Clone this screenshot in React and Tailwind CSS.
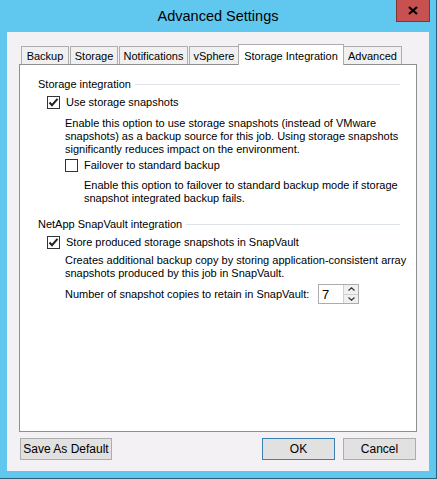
import React from "react";

function Check({ checked }) {
  return (
    <div className="w-[13px] h-[13px] border border-[#333333] bg-white flex items-center justify-center shrink-0">
      {checked && (
        <svg width="11" height="11" viewBox="0 0 11 11">
          <path d="M1.5 5.5 L4 8.2 L9.5 1.8" fill="none" stroke="#222" strokeWidth="2" />
        </svg>
      )}
    </div>
  );
}

function Tab({ label, w, selected }) {
  if (selected) {
    return (
      <div
        className={`${w} h-[21px] -mx-[2px] relative z-10 bg-white border border-b-0 border-[#adadad] flex items-start justify-center pt-[3px] -mb-[1px]`}
      >
        {label}
      </div>
    );
  }
  return (
    <div
      className={`${w} h-[19px] mt-[2px] bg-[#f0f0f0] border border-[#adadad] border-b-0 flex items-center justify-center`}
    >
      {label}
    </div>
  );
}

export default function App() {
  return (
    <div
      className="w-[437px] h-[479px] bg-[#60c8ef] border-r border-b border-[#2f5f74] flex flex-col text-black"
      style={{ fontFamily: '"Liberation Sans", Arial, sans-serif' }}
    >
      <div className="h-[32px] relative flex items-center justify-center shrink-0">
        <span className="text-[14.5px] leading-none mt-[1px]">Advanced Settings</span>
        <div className="absolute top-0 right-[6px] w-[34px] h-[22px] bg-[#c75050] border border-[#803333] border-t-0 flex items-center justify-center">
          <svg width="10" height="9" viewBox="0 0 10 9">
            <path d="M1 1 L9 8 M9 1 L1 8" stroke="#000" strokeWidth="2.2" />
          </svg>
        </div>
      </div>
      <div className="ml-[7px] mr-[7px] mb-[7px] flex-1 bg-[#f4f1f5] flex flex-col px-[12px] pt-[12px] text-[11px]">
        <div className="flex items-start h-[20px] pl-[2px] gap-[1px]">
          <Tab label="Backup" w="w-[48px]" />
          <Tab label="Storage" w="w-[48px]" />
          <Tab label="Notifications" w="w-[69px]" />
          <Tab label="vSphere" w="w-[50px]" />
          <Tab label="Storage Integration" w="w-[106px]" selected />
          <Tab label="Advanced" w="w-[59px]" />
        </div>
        <div className="h-[368px] bg-white border border-[#8e8f8f] flex flex-col pl-[18px] pr-[16px] pt-[13px] leading-[13px] whitespace-nowrap">
          <div className="flex items-center h-[13px]">
            <span>Storage integration</span>
            <div className="flex-1 h-px bg-[#dde3e8] ml-[4px]" />
          </div>
          <div className="flex items-center h-[13px] mt-[5px] pl-[9px]">
            <Check checked />
            <span className="ml-[6px]">Use storage snapshots</span>
          </div>
          <div className="mt-[8px] pl-[27px]">
            Enable this option to use storage snapshots (instead of VMware
            <br />
            snapshots) as a backup source for this job. Using storage snapshots
            <br />
            significantly reduces impact on the environment.
          </div>
          <div className="flex items-center h-[13px] mt-[3px] pl-[27px]">
            <Check />
            <span className="ml-[6px]">Failover to standard backup</span>
          </div>
          <div className="mt-[7px] pl-[46px]">
            Enable this option to failover to standard backup mode if storage
            <br />
            snapshot integrated backup fails.
          </div>
          <div className="flex items-center h-[13px] mt-[13px]">
            <span>NetApp SnapVault integration</span>
            <div className="flex-1 h-px bg-[#dde3e8] ml-[4px]" />
          </div>
          <div className="flex items-center h-[13px] mt-[5px] pl-[9px]">
            <Check checked />
            <span className="ml-[6px]">Store produced storage snapshots in SnapVault</span>
          </div>
          <div className="mt-[5px] pl-[27px]">
            Creates additional backup copy by storing application-consistent array
            <br />
            snapshots produced by this job in SnapVault.
          </div>
          <div className="flex items-center mt-[4px] pl-[27px]">
            <span className="w-[253px]">Number of snapshot copies to retain in SnapVault:</span>
            <div className="flex h-[20px] border border-[#acacac] bg-white">
              <div className="w-[24px] pl-[3px] text-[13px] flex items-center">7</div>
              <div className="flex flex-col w-[15px] border-l border-[#d0d0d0] bg-[#f0f0f0]">
                <div className="flex-1 flex items-center justify-center border-b border-[#d0d0d0]">
                  <svg width="7" height="4" viewBox="0 0 7 4"><path d="M0.5 3.5 L3.5 0.8 L6.5 3.5" fill="none" stroke="#333" strokeWidth="1.2" /></svg>
                </div>
                <div className="flex-1 flex items-center justify-center">
                  <svg width="7" height="4" viewBox="0 0 7 4"><path d="M0.5 0.5 L3.5 3.2 L6.5 0.5" fill="none" stroke="#333" strokeWidth="1.2" /></svg>
                </div>
              </div>
            </div>
          </div>
        </div>
        <div className="flex mt-[6px] h-[22px] text-[12px]">
          <div className="w-[92px] h-[22px] border border-[#adadad] bg-[#e1e1e1] flex items-center justify-center ml-[1px]">Save As Default</div>
          <div className="flex-1" />
          <div className="w-[73px] h-[22px] border border-[#3c7fb1] bg-[#e1e1e1] flex items-center justify-center">OK</div>
          <div className="w-[73px] h-[22px] border border-[#adadad] bg-[#e1e1e1] flex items-center justify-center ml-[8px] mr-[1px]">Cancel</div>
        </div>
      </div>
    </div>
  );
}
